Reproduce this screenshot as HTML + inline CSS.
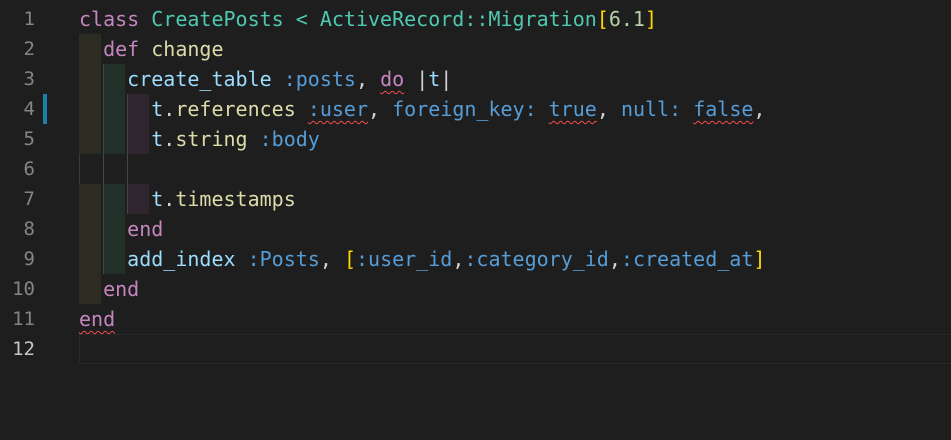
<!DOCTYPE html>
<html><head><meta charset="utf-8"><style>
body{margin:0;background:#1e1e1e;width:951px;height:440px;overflow:hidden;position:relative;font-family:"DejaVu Sans Mono","Liberation Mono",monospace;}
.ln{position:absolute;left:0;width:35px;text-align:right;color:#858585;font-size:19px;line-height:30px;}
.code{position:absolute;left:79px;white-space:pre;font-size:20px;line-height:30px;color:#d4d4d4;}
.code span{letter-spacing:0}
.b{position:absolute;}
.k{color:#c586c0}.c{color:#4ec9b0}.f{color:#dcdcaa}.v{color:#9cdcfe}.s{color:#569cd6}.n{color:#b5cea8}.y{color:#ffd700}
.sq{text-decoration:underline wavy #f14c4c;text-decoration-thickness:1px;text-underline-offset:4px}
</style></head><body>
<div class="b" style="left:79px;top:334px;width:872px;height:28px;border:1px solid #282828;border-right:none"></div>
<div class="b" style="left:79px;top:34px;width:22px;height:120px;background:#2c2c22"></div>
<div class="b" style="left:79px;top:184px;width:22px;height:120px;background:#2c2c22"></div>
<div class="b" style="left:79px;top:154px;width:1px;height:30px;background:#3a3a3a"></div>
<div class="b" style="left:103px;top:64px;width:22px;height:90px;background:#23302a"></div>
<div class="b" style="left:103px;top:184px;width:22px;height:90px;background:#23302a"></div>
<div class="b" style="left:103px;top:64px;width:1px;height:210px;background:#3e4a44"></div>
<div class="b" style="left:127px;top:94px;width:22px;height:60px;background:#2f2630"></div>
<div class="b" style="left:127px;top:184px;width:22px;height:30px;background:#2f2630"></div>
<div class="b" style="left:127px;top:94px;width:1px;height:120px;background:#4a4048"></div>
<div class="b" style="left:43px;top:94px;width:4px;height:30px;background:#1b81a8"></div>
<div class="ln" style="top:4px">1</div><div class="ln" style="top:34px">2</div><div class="ln" style="top:64px">3</div><div class="ln" style="top:94px">4</div><div class="ln" style="top:124px">5</div><div class="ln" style="top:154px">6</div><div class="ln" style="top:184px">7</div><div class="ln" style="top:214px">8</div><div class="ln" style="top:244px">9</div><div class="ln" style="top:274px">10</div><div class="ln" style="top:304px">11</div><div class="ln" style="top:334px;color:#c6c6c6">12</div>
<div class="code" style="top:4px"><span class="k">class</span> <span class="c">CreatePosts &lt; ActiveRecord::Migration</span><span class="y">[</span><span class="n">6.1</span><span class="y">]</span>
  <span class="k">def</span> <span class="f">change</span>
    <span class="v">create_table</span> <span class="s">:posts</span>, <span class="k sq">do</span> |<span class="v">t</span>|
      <span class="v">t</span>.<span class="f">references</span> <span class="s sq">:user</span>, <span class="s">foreign_key:</span> <span class="s sq">true</span>, <span class="s">null:</span> <span class="s sq">false</span>,
      <span class="v">t</span>.<span class="f">string</span> <span class="s">:body</span>

      <span class="v">t</span>.<span class="f">timestamps</span>
    <span class="k">end</span>
    <span class="v">add_index</span> <span class="s">:Posts</span>, <span class="y">[</span><span class="s">:user_id</span>,<span class="s">:category_id</span>,<span class="s">:created_at</span><span class="y">]</span>
  <span class="k">end</span>
<span class="k sq">end</span>
</div>
</body></html>
